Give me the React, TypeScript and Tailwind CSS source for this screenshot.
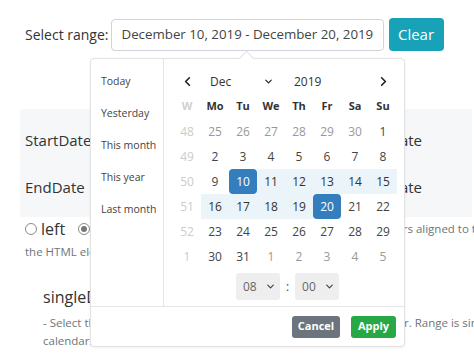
import { ChevronLeft, ChevronRight, ChevronDown } from 'lucide-react';

type Day = { n: number; off?: boolean; sel?: boolean; range?: boolean };

const weeks: { w: number; days: Day[] }[] = [
  { w: 48, days: [25, 26, 27, 28, 29, 30].map((n) => ({ n, off: true })).concat([{ n: 1 }]) },
  { w: 49, days: [2, 3, 4, 5, 6, 7, 8].map((n) => ({ n })) },
  {
    w: 50,
    days: [{ n: 9 }, { n: 10, sel: true }, ...[11, 12, 13, 14, 15].map((n) => ({ n, range: true }))],
  },
  {
    w: 51,
    days: [...[16, 17, 18, 19].map((n) => ({ n, range: true })), { n: 20, sel: true }, { n: 21 }, { n: 22 }],
  },
  { w: 52, days: [23, 24, 25, 26, 27, 28, 29].map((n) => ({ n })) },
  { w: 1, days: [{ n: 30 }, { n: 31 }, ...[1, 2, 3, 4, 5].map((n) => ({ n, off: true }))] },
];

const ranges = ['Today', 'Yesterday', 'This month', 'This year', 'Last month'];
const dayNames = ['Mo', 'Tu', 'We', 'Th', 'Fr', 'Sa', 'Su'];

const Radio = ({ checked }: { checked?: boolean }) => (
  <span className="inline-flex h-[12px] w-[12px] items-center justify-center rounded-full border border-[#8a8a8a] bg-white">
    {checked && <span className="h-[6px] w-[6px] rounded-full bg-[#777]" />}
  </span>
);

const Picker = () => (
  <div className="absolute left-[90px] top-[58px] w-[315px] rounded-[4px] border border-[#e2e2e2] bg-white text-[#333] shadow-[0_1px_3px_rgba(0,0,0,0.06)]">
    <div className="absolute left-[150px] top-[-6px] h-[11px] w-[11px] rotate-45 border-l border-t border-[#e2e2e2] bg-white" />
    <div className="flex h-[248px] border-b border-[#e5e5e5]">
      <ul className="w-[73px] shrink-0 border-r border-[#e5e5e5] pt-[7px] text-[10.5px] text-[#444]">
        {ranges.map((r) => (
          <li key={r} className="flex h-[32px] items-center pl-[10px]">
            {r}
          </li>
        ))}
      </ul>
      <div className="flex-1 pl-[9px] pt-[10px]">
        <div className="grid grid-cols-[repeat(8,28px)] text-[12px]">
          <div className="flex h-[25px] items-center justify-center">
            <ChevronLeft size={15} strokeWidth={2.6} className="text-[#222]" />
          </div>
          <div className="col-span-3 flex h-[25px] items-center pl-[9px] pr-[11px]">
            <span>Dec</span>
            <ChevronDown size={11} strokeWidth={2.6} className="ml-auto text-[#222]" />
          </div>
          <div className="col-span-3 flex h-[25px] items-center pl-[9px]">2019</div>
          <div className="flex h-[25px] items-center justify-center">
            <ChevronRight size={15} strokeWidth={2.6} className="text-[#222]" />
          </div>

          <div className="flex h-[25px] items-center justify-center text-[11px] font-bold text-[#d0d0d0]">W</div>
          {dayNames.map((d) => (
            <div key={d} className="flex h-[25px] items-center justify-center text-[11px] font-bold text-[#333]">
              {d}
            </div>
          ))}

          {weeks.map((wk) => (
            <div key={wk.w} className="contents">
              <div className="flex h-[25px] items-center justify-center text-[#ccc]">{wk.w}</div>
              {wk.days.map((d, i) => (
                <div
                  key={i}
                  className={
                    d.sel
                      ? 'flex h-[25px] items-center justify-center rounded-[4px] bg-[#357ebd] text-white'
                      : d.range
                        ? 'flex h-[25px] items-center justify-center bg-[#ebf4f8] text-[#333]'
                        : d.off
                          ? 'flex h-[25px] items-center justify-center text-[#999]'
                          : 'flex h-[25px] items-center justify-center text-[#444]'
                  }
                >
                  {d.n}
                </div>
              ))}
            </div>
          ))}
        </div>
        <div className="mt-[4px] flex items-center justify-center gap-[6px] pr-[2px] text-[12px] text-[#666]">
          <div className="flex h-[27px] w-[44px] items-center rounded-[3px] bg-[#eee] pl-[7px] pr-[4px]">
            <span>08</span>
            <ChevronDown size={11} strokeWidth={2.6} className="ml-auto text-[#444]" />
          </div>
          <span className="text-[#444]">:</span>
          <div className="flex h-[27px] w-[44px] items-center rounded-[3px] bg-[#eee] pl-[7px] pr-[4px]">
            <span>00</span>
            <ChevronDown size={11} strokeWidth={2.6} className="ml-auto text-[#444]" />
          </div>
        </div>
      </div>
    </div>
    <div className="flex h-[39px] items-center justify-end gap-[11px] pr-[8px]">
      <button className="h-[22px] w-[48px] rounded-[3px] bg-[#6c757d] text-[11px] font-bold text-white">Cancel</button>
      <button className="h-[22px] w-[45px] rounded-[3px] bg-[#28a745] text-[11px] font-bold text-white">Apply</button>
    </div>
  </div>
);

export default function App() {
  return (
    <div className="relative h-[364px] w-[474px] overflow-hidden bg-white font-['Open_Sans','Noto_Sans',sans-serif] text-[#212529]">
      <div className="flex items-center pl-[25px] pt-[18px]">
        <span className="text-[14px] text-[#333]">Select range:</span>
        <div className="ml-[2px] flex h-[32px] w-[273px] items-center whitespace-nowrap rounded-[4px] border border-[#ced4da] pl-[10px] text-[13.3px] text-[#444]">
          December 10, 2019 - December 20, 2019
        </div>
        <button className="ml-[5px] h-[33px] w-[55px] rounded-[4px] bg-[#17a2b8] text-[15px] text-white">Clear</button>
      </div>

      <div className="ml-[20px] mt-[58px] w-[452px] bg-[#f5f7f9] pb-[6px] pt-[8px] text-[15px] text-[#333]">
        <div className="flex h-[47px] items-center pl-[5px]">
          <span>StartDate</span>
          <span className="ml-auto mr-[50px]">StartDate</span>
        </div>
        <div className="flex h-[47px] items-center pl-[5px]">
          <span>EndDate</span>
          <span className="ml-auto mr-[50px]">EndDate</span>
        </div>
      </div>

      <div className="flex h-[24px] items-center whitespace-nowrap pl-[25px]">
        <label className="flex items-center gap-[4px] text-[16px] text-[#333]">
          <Radio /> left
        </label>
        <label className="ml-[13px] flex items-center gap-[4px] text-[16px] text-[#333]">
          <Radio checked /> right
        </label>
        <label className="ml-[13px] flex items-center gap-[4px] text-[16px] text-[#333]">
          <Radio /> center
        </label>
        <span className="ml-[10px] text-[11.5px] text-[#6c757d]">- opens the picker with the calendars aligned to the left or right of</span>
      </div>
      <p className="h-[22px] whitespace-nowrap pl-[25px] text-[11.5px] leading-[22px] text-[#6c757d]">
        the HTML element it is attached to.
      </p>

      <div className="pl-[43px] pt-[22px]">
        <h3 className="text-[16px] leading-[24px] text-[#333]">singleDatePicker</h3>
        <p className="mt-[5px] whitespace-nowrap text-[11.5px] leading-[18px] text-[#6c757d]">
          - Select this to show just a single date picker not the full range picker. Range is single date only, two
        </p>
        <p className="whitespace-nowrap text-[11.5px] leading-[18px] text-[#6c757d]">calendars are not shown.</p>
      </div>

      <Picker />
    </div>
  );
}
